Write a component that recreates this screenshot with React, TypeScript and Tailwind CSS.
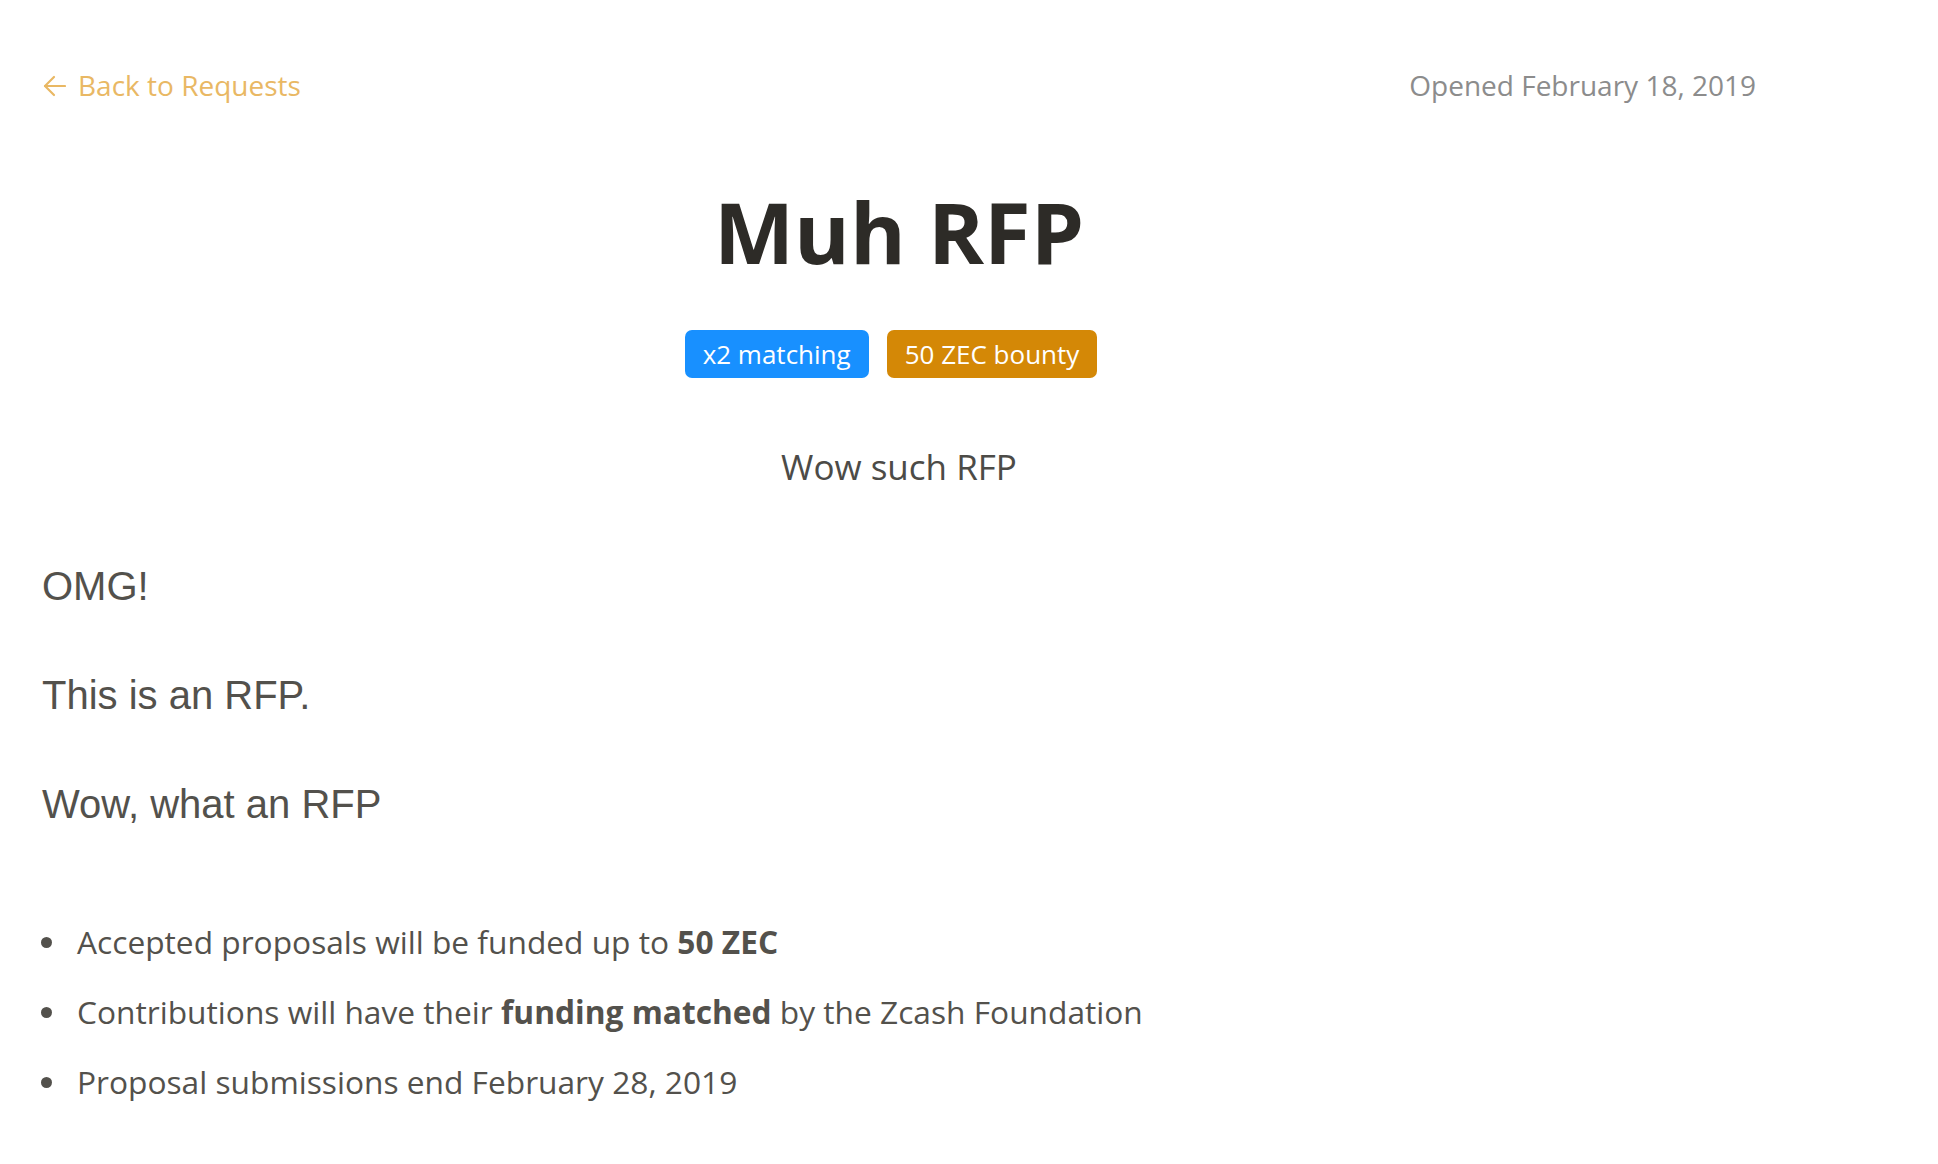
import React from "react";

const openSans = { fontFamily: '"Open Sans", "Noto Sans", sans-serif' };

export default function App() {
  return (
    <div className="min-h-[1164px] w-full bg-white" style={openSans}>
      <div className="ml-[42px] w-[1714px] pt-[65px]">
        {/* header row */}
        <div className="flex items-center justify-between text-[28px] leading-[40px]">
          <a className="flex items-center text-[#e9b864]" href="#">
            <svg
              width="24"
              height="22"
              viewBox="0 0 24 22"
              fill="none"
              stroke="#e9b864"
              strokeWidth="2.2"
              strokeLinecap="round"
              strokeLinejoin="round"
              className="mr-[12px] mt-[1px]"
            >
              <path d="M23 11H3" />
              <path d="M12 2L3 11l9 9" />
            </svg>
            <span>Back to Requests</span>
          </a>
          <div className="text-[#8c8c8c]">Opened February 18, 2019</div>
        </div>

        {/* title */}
        <h1 className="mt-[76px] text-center text-[85px] font-bold leading-[100px] text-[#2d2b27]">
          Muh RFP
        </h1>

        {/* badges */}
        <div className="mt-[49px] flex justify-center">
          <span className="mr-[18px] flex h-[48px] items-center rounded-[7px] bg-[#1890ff] px-[18px] text-[26px] text-white">
            x2 matching
          </span>
          <span className="mr-[16px] flex h-[48px] items-center rounded-[7px] bg-[#d48806] px-[18px] text-[26px] text-white">
            50 ZEC bounty
          </span>
        </div>

        {/* brief */}
        <p className="mt-[64px] text-center text-[35px] leading-[50px] text-[#4c4b47]">
          Wow such RFP
        </p>

        {/* markdown body */}
        <div
          className="mt-[67px] flex flex-col gap-[55px] text-[40px] leading-[54px] text-[#53514c]"
          style={{ fontFamily: '"Liberation Sans", Arial, sans-serif' }}
        >
          <p>OMG!</p>
          <p>This is an RFP.</p>
          <p>Wow, what an RFP</p>
        </div>

        {/* list */}
        <ul className="mt-[76px] flex flex-col text-[31.7px] leading-[70px] text-[#53514c]">
          <li className="flex items-center">
            <span className="ml-[-1px] mr-[25px] h-[11px] w-[11px] rounded-full bg-[#53514c]" />
            <span>
              Accepted proposals will be funded up to <b className="font-bold">50 ZEC</b>
            </span>
          </li>
          <li className="flex items-center">
            <span className="ml-[-1px] mr-[25px] h-[11px] w-[11px] rounded-full bg-[#53514c]" />
            <span>
              Contributions will have their <b className="font-bold">funding matched</b> by the Zcash Foundation
            </span>
          </li>
          <li className="flex items-center">
            <span className="ml-[-1px] mr-[25px] h-[11px] w-[11px] rounded-full bg-[#53514c]" />
            <span>Proposal submissions end February 28, 2019</span>
          </li>
        </ul>
      </div>
    </div>
  );
}
